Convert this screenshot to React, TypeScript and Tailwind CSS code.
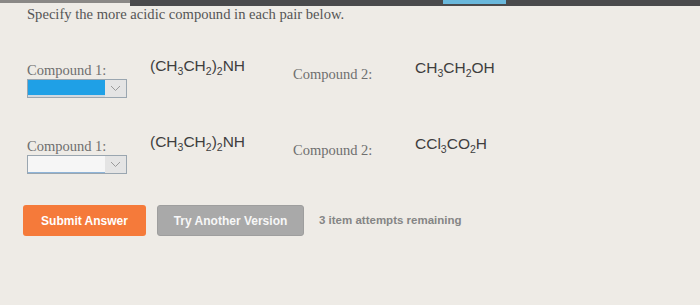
import React from "react";

const serif = { fontFamily: '"Liberation Serif", "Times New Roman", serif' };
const sans = { fontFamily: '"Liberation Sans", Arial, sans-serif' };

function Select({ filled }: { filled: boolean }) {
  return (
    <div className="flex h-[19px] w-[100px] border border-[#9aa6b0] bg-[#f4f4f4]">
      <div className={filled ? "flex-1 bg-[#1fa0e6] border-b-2 border-[#d0d8e0]" : "flex-1 bg-[#f6f6f6] border-b border-[#8fb4d8]"} />
      <div className="flex w-[21px] items-center justify-center bg-[#e4e4e4]">
        <svg width="11" height="7" viewBox="0 0 11 7">
          <path d="M1 1 L5.5 5.5 L10 1" fill="none" stroke="#9a9a9a" strokeWidth="1" />
        </svg>
      </div>
    </div>
  );
}

function Formula({ children }: { children: React.ReactNode }) {
  return (
    <div className="text-[15.5px] text-[#3e3e3e] leading-none" style={sans}>
      {children}
    </div>
  );
}

function Row({ filled, f1, f2, mt }: { filled: boolean; f1: React.ReactNode; f2: React.ReactNode; mt: string }) {
  return (
    <div className={`flex ${mt}`}>
      <div className="w-[123px] flex flex-col pt-[4px]">
        <div className="text-[14.5px] text-[#6f6f6f] leading-[16px]" style={serif}>Compound 1:</div>
        <div className="mt-[1px]"><Select filled={filled} /></div>
      </div>
      <div className="w-[143px]"><Formula>{f1}</Formula></div>
      <div className="w-[122px] pt-[8px] text-[14.5px] text-[#6f6f6f] leading-[16px]" style={serif}>Compound 2:</div>
      <div className="pt-[2px]"><Formula>{f2}</Formula></div>
    </div>
  );
}

const sub = (s: string) => <sub className="text-[10.5px] relative top-[1px] align-baseline" style={{ verticalAlign: "-3px" }}>{s}</sub>;

export default function App() {
  return (
    <div className="w-[700px] h-[305px] bg-[#eeebe6] overflow-hidden relative">
      <div className="flex h-[6px]">
        <div className="w-[130px] h-[3px] bg-[#8a8886]" />
        <div className="flex-1 bg-[#4a4a4c] flex">
          <div className="ml-[313px] w-[63px] h-[4px] bg-[#6ab8dc]" />
        </div>
      </div>
      <div className="pl-[27px]">
        <div className="-mt-[1px] text-[14.6px] text-[#555] leading-[18px]" style={serif}>
          Specify the more acidic compound in each pair below.
        </div>
        <Row
          mt="mt-[35px]"
          filled={true}
          f1={<>(CH{sub("3")}CH{sub("2")}){sub("2")}NH</>}
          f2={<>CH{sub("3")}CH{sub("2")}OH</>}
        />
        <Row
          mt="mt-[36px]"
          filled={false}
          f1={<>(CH{sub("3")}CH{sub("2")}){sub("2")}NH</>}
          f2={<>CCl{sub("3")}CO{sub("2")}H</>}
        />
      </div>
      <div className="flex items-center pl-[23px] mt-[31px]" style={sans}>
        <div className="w-[123px] h-[31px] rounded-[3px] bg-[#f57a3a] flex items-center justify-center text-white font-bold text-[12px]">
          Submit Answer
        </div>
        <div className="ml-[11px] w-[147px] h-[31px] rounded-[3px] bg-[#a9a9a9] border border-[#9e9e9e] flex items-center justify-center text-[#f7f7f7] font-bold text-[12px]">
          Try Another Version
        </div>
        <div className="ml-[15px] text-[11.5px] font-bold text-[#858585]">3 item attempts remaining</div>
      </div>
    </div>
  );
}
